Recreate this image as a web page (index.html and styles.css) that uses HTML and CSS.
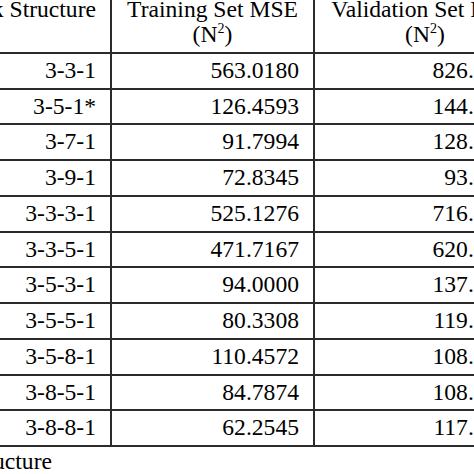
FILE: index.html
```html
<!DOCTYPE html>
<html>
<head>
<meta charset="utf-8">
<link rel="stylesheet" href="styles.css">
</head>
<body>
<div class="page">
  <table class="mse">
    <thead>
      <tr>
        <th class="c1">Network Structure</th>
        <th class="c2">Training Set MSE<br>(N<sup>2</sup>)</th>
        <th class="c3">Validation Set MSE<br>(N<sup>2</sup>)</th>
      </tr>
    </thead>
    <tbody>
      <tr><td class="c1">3-3-1</td><td class="c2">563.0180</td><td class="c3">826.1532</td></tr>
      <tr><td class="c1">3-5-1*</td><td class="c2">126.4593</td><td class="c3">144.6271</td></tr>
      <tr><td class="c1">3-7-1</td><td class="c2">91.7994</td><td class="c3">128.3346</td></tr>
      <tr><td class="c1">3-9-1</td><td class="c2">72.8345</td><td class="c3">93.4127</td></tr>
      <tr><td class="c1">3-3-3-1</td><td class="c2">525.1276</td><td class="c3">716.2283</td></tr>
      <tr><td class="c1">3-3-5-1</td><td class="c2">471.7167</td><td class="c3">620.5519</td></tr>
      <tr><td class="c1">3-5-3-1</td><td class="c2">94.0000</td><td class="c3">137.2208</td></tr>
      <tr><td class="c1">3-5-5-1</td><td class="c2">80.3308</td><td class="c3">119.6417</td></tr>
      <tr><td class="c1">3-5-8-1</td><td class="c2">110.4572</td><td class="c3">108.9034</td></tr>
      <tr><td class="c1">3-8-5-1</td><td class="c2">84.7874</td><td class="c3">108.2215</td></tr>
      <tr><td class="c1">3-8-8-1</td><td class="c2">62.2545</td><td class="c3">117.3890</td></tr>
    </tbody>
  </table>
  <div class="caption"><span>* Optimal network structure</span></div>
</div>
</body>
</html>
```
FILE: styles.css
```css
html, body {
  margin: 0;
  padding: 0;
  background: #fff;
}
body {
  width: 474px;
  height: 474px;
  overflow: hidden;
}
.page {
  font-family: "Liberation Serif", "Times New Roman", serif;
  font-size: 23.6px;
  color: #000;
  margin-top: -3px;
}
.mse {
  border-collapse: separate;
  border-spacing: 0;
  table-layout: fixed;
  width: 635px;
  margin-left: -100px;
}
.mse th, .mse td {
  box-sizing: border-box;
  padding: 0 14px;
  border-bottom: 2px solid #2b2b2b;
  white-space: nowrap;
}
.mse th {
  font-weight: normal;
  line-height: 25px;
  padding-top: 0;
  padding-bottom: 5px;
  vertical-align: top;
}
.mse td {
  line-height: 33.73px;
  text-align: right;
}
.mse th.c1 { text-align: right; }
.mse th.c2, .mse th.c3 { text-align: center; }
.c1 { width: 212px; border-right: 2px solid #2b2b2b; }
.c2 { width: 203px; border-right: 2px solid #2b2b2b; }
.c3 { width: 220px; }
.mse sup {
  font-size: 14px;
  line-height: 0;
  vertical-align: 9px;
}
.caption {
  width: 52px;
  margin-top: 2px;
  display: flex;
  justify-content: flex-end;
  line-height: 25px;
  white-space: nowrap;
}
```
